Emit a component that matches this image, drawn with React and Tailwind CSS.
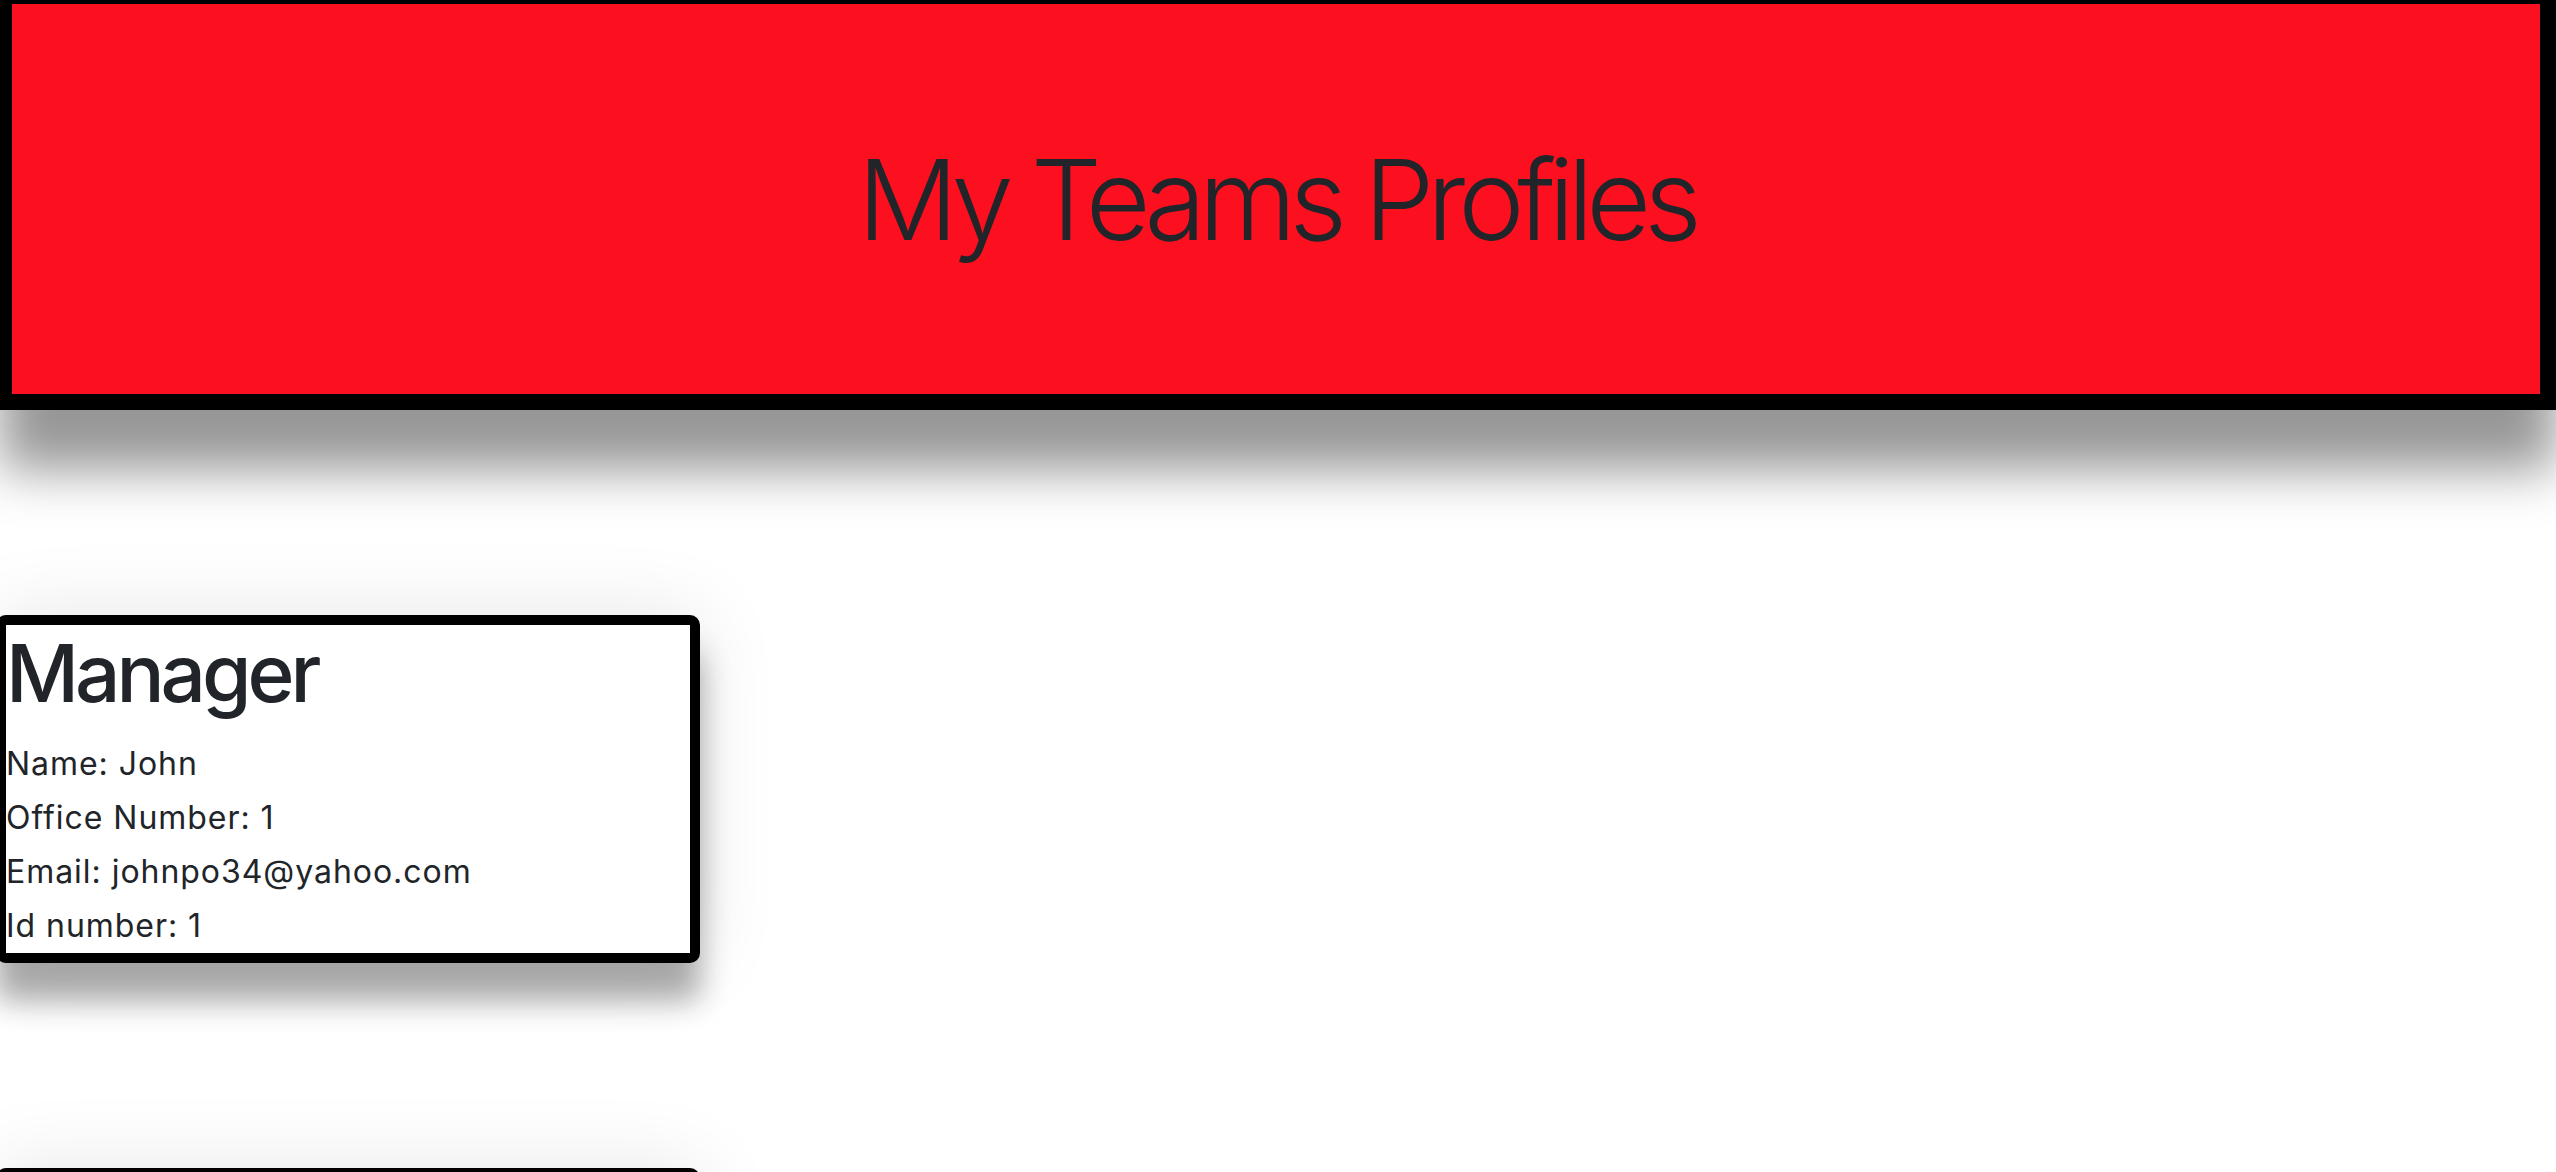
import React from 'react';

const team = [
  {
    role: 'Manager',
    lines: ['Name: John', 'Office Number: 1', 'Email: johnpo34@yahoo.com', 'Id number: 1'],
  },
  {
    role: 'Engineer',
    lines: ['Name: Mike', 'Github: mike22', 'Email: mike22@gmail.com', 'Id number: 2'],
  },
];

function ProfileCard({ role, lines }) {
  return (
    <div className="-ml-1 w-[704px] rounded-[10px] border-[10px] border-black bg-white shadow-[0_38px_30px_rgba(0,0,0,0.32),0_0_80px_rgba(0,0,0,0.1)]">
      <h2 className="mb-4 text-[80px] font-medium leading-[96px] tracking-[-0.05em] text-[#212529]">{role}</h2>
      {lines.map((line) => (
        <p key={line} className="text-[32px] leading-[54px] tracking-[0.03em] text-[#212529]">
          {line}
        </p>
      ))}
    </div>
  );
}

export default function App() {
  return (
    <div className="min-h-screen bg-white" style={{ fontFamily: 'Inter, "Noto Sans", sans-serif' }}>
      <header className="relative z-10 border-t-[4px] border-l-[12px] border-r-[16px] border-b-[16px] border-black bg-[#fc0f1e] py-[128px] text-center shadow-[0_60px_48px_rgba(0,0,0,0.41)]">
        <h1 className="text-[112px] font-light leading-[134px] tracking-[-0.065em] text-[#212529]">My Teams Profiles</h1>
      </header>

      <main className="mt-[205px] flex flex-col gap-[205px] pb-[205px]">
        {team.map((member) => (
          <ProfileCard key={member.role} role={member.role} lines={member.lines} />
        ))}
      </main>
    </div>
  );
}
